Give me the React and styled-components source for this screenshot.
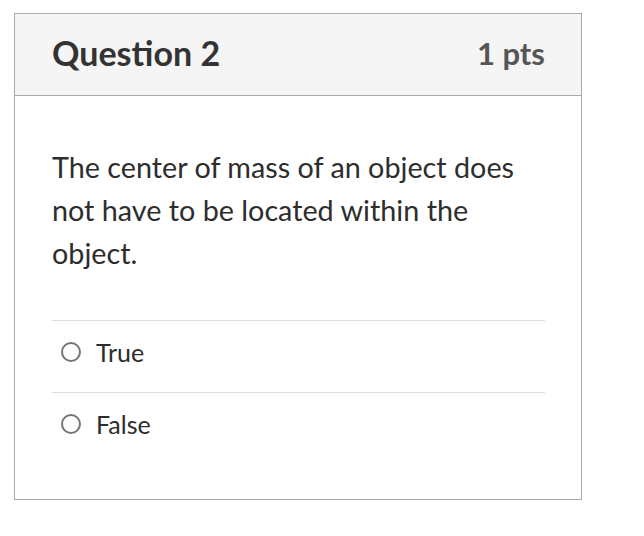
import React from "react";
import styled, { createGlobalStyle } from "styled-components";

const GlobalStyle = createGlobalStyle`
  body {
    margin: 0;
    background: #fff;
    font-family: Lato, "Open Sans", sans-serif;
    color: #2d3b45;
  }
`;

const Page = styled.div`
  padding: 13px 0 0 14px;
`;

const Card = styled.section`
  box-sizing: border-box;
  width: 568px;
  height: 487px;
  border: 1px solid #aaaaaa;
`;

const Header = styled.header`
  display: flex;
  justify-content: space-between;
  align-items: center;
  height: 82px;
  padding: 0 36px 4px 37px;
  box-sizing: border-box;
  background: #f5f5f5;
  border-bottom: 1px solid #aaaaaa;
`;

const Title = styled.h2`
  margin: 0;
  font-size: 34px;
  font-weight: 700;
  color: #333;
`;

const Points = styled.span`
  font-size: 31px;
  font-weight: 700;
  color: #565656;
`;

const Body = styled.div`
  padding: 50px 36px 0 37px;
`;

const Prompt = styled.p`
  margin: 0 0 45px;
  font-size: 28.75px;
  line-height: 43px;
  color: #2d2d2d;
`;

const Answer = styled.label`
  display: flex;
  align-items: center;
  gap: 15px;
  height: 72px;
  padding: 0 0 9px 9px;
  box-sizing: border-box;
  border-top: 1px solid #dddddd;
  font-size: 25px;
  color: #2d2d2d;
`;

const Radio = styled.span`
  width: 20px;
  height: 20px;
  box-sizing: border-box;
  border: 2px solid #757575;
  border-radius: 50%;
  flex: none;
`;

const answers = ["True", "False"];

export default function App() {
  return (
    <Page>
      <GlobalStyle />
      <Card>
        <Header>
          <Title>Question 2</Title>
          <Points>1 pts</Points>
        </Header>
        <Body>
          <Prompt>
            The center of mass of an object does not have to be located within
            the object.
          </Prompt>
          {answers.map((a) => (
            <Answer key={a}>
              <Radio />
              {a}
            </Answer>
          ))}
        </Body>
      </Card>
    </Page>
  );
}
